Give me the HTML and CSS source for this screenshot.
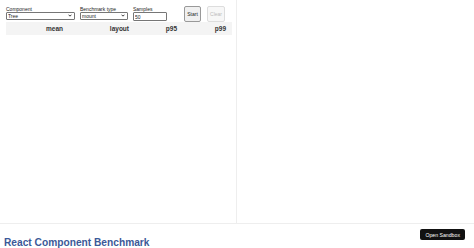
FILE: index.html
```html
<!DOCTYPE html>
<html lang="en">
<head>
  <meta charset="UTF-8" />
  <meta name="viewport" content="width=device-width, initial-scale=1.0" />
  <title>React Component Benchmark</title>
  <link rel="stylesheet" href="styles.css">
</head>
<body>
  <div class="app">
    <div class="main">
      <!-- Benchmark controls and results -->
      <div class="panel">
        <div class="controls">
          <div class="field field-component">
            <label for="component">Component</label>
            <div class="select-wrap">
              <select id="component">
                <option>Tree</option>
              </select>
              <svg class="chevron" viewBox="0 0 6 4"><path d="M0.8 0.8 L3 3 L5.2 0.8" /></svg>
            </div>
          </div>
          <div class="field field-type">
            <label for="type">Benchmark type</label>
            <div class="select-wrap">
              <select id="type">
                <option>mount</option>
              </select>
              <svg class="chevron" viewBox="0 0 6 4"><path d="M0.8 0.8 L3 3 L5.2 0.8" /></svg>
            </div>
          </div>
          <div class="field field-samples">
            <label for="samples">Samples</label>
            <input type="number" id="samples" value="50" />
          </div>
          <button class="btn btn-start">Start</button>
          <button class="btn btn-clear" disabled>Clear</button>
        </div>

        <div class="results">
          <div class="results-head">
            <span>mean</span>
            <span>layout</span>
            <span>p95</span>
            <span>p99</span>
          </div>
        </div>
      </div>

      <!-- Preview area -->
      <div class="preview"></div>
    </div>

    <div class="footer">
      <h1 class="title">React Component Benchmark</h1>
      <button class="sandbox">Open Sandbox</button>
    </div>
  </div>
</body>
</html>
```

FILE: styles.css
```css
* {
  box-sizing: border-box;
}

body {
  margin: 0;
  font-family: 'Liberation Sans', Arial, sans-serif;
  color: #222;
  background: #fff;
}

.app {
  display: flex;
  flex-direction: column;
  height: 100vh;
}

.main {
  flex: 1;
  display: flex;
  min-height: 0;
}

/* Left panel */
.panel {
  width: 237px;
  padding: 6px 4px 0 6px;
  border-right: 1px solid #eee;
}

.controls {
  display: flex;
  align-items: flex-start;
  height: 16px;
}

.field {
  display: flex;
  flex-direction: column;
  margin-right: 5px;
}

.field label {
  font-size: 5px;
  line-height: 6px;
  color: #222;
}

.select-wrap {
  position: relative;
}

.field select,
.field input {
  display: block;
  font-family: inherit;
  font-size: 5px;
  height: 8px;
  margin: 0;
  padding: 0 1px;
  border: 1px solid #767676;
  border-radius: 1px;
  background: #fff;
  color: #222;
  appearance: none;
  -webkit-appearance: none;
}

/* Small dropdown arrow drawn over the select */
.chevron {
  position: absolute;
  right: 3px;
  top: 2px;
  width: 4px;
  height: 3px;
  fill: none;
  stroke: #222;
  stroke-width: 1.3;
  pointer-events: none;
}

.field-component select {
  width: 69px;
}

.field-type select {
  width: 48px;
}

.field-samples input {
  width: 34px;
  height: 9px;
  -moz-appearance: textfield;
}

.field-samples input::-webkit-inner-spin-button,
.field-samples input::-webkit-outer-spin-button {
  -webkit-appearance: none;
  margin: 0;
}

.btn {
  font-family: inherit;
  font-size: 5px;
  width: 17px;
  height: 16px;
  padding: 0;
  margin: 0;
  border: 1px solid #999;
  border-radius: 2px;
  background: #f0f0f0;
  color: #222;
}

.btn-start {
  margin-left: 12px;
}

.btn-clear {
  margin-left: 6px;
  width: 18px;
  color: #bbb;
  border-color: #ddd;
  background: #f7f7f7;
}

/* Results table */
.results-head {
  display: grid;
  grid-template-columns: 61px 66px 48px 49px;
  height: 13px;
  align-items: center;
  background: #f4f4f4;
  font-size: 6.5px;
  font-weight: bold;
  color: #333;
}

.results-head span {
  text-align: right;
  padding-right: 4px;
}

.preview {
  flex: 1;
}

/* Footer */
.footer {
  height: 25px;
  display: flex;
  justify-content: space-between;
  align-items: flex-start;
  border-top: 1px solid #eee;
  padding: 5px 9px 0 4px;
}

.title {
  margin: 8px 0 0;
  font-size: 10.2px;
  line-height: 12px;
  font-weight: bold;
  color: #3b5998;
}

.sandbox {
  font-family: inherit;
  font-size: 5.2px;
  height: 11px;
  padding: 0 5px;
  margin: 0;
  border: none;
  border-radius: 2px;
  background: #111;
  color: #fff;
}
```
